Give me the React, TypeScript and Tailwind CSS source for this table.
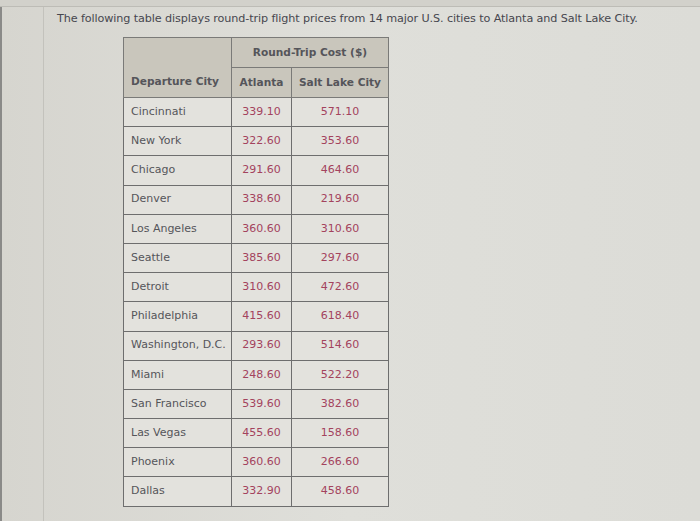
import React from "react";

const rows: [string, string, string][] = [
  ["Cincinnati", "339.10", "571.10"],
  ["New York", "322.60", "353.60"],
  ["Chicago", "291.60", "464.60"],
  ["Denver", "338.60", "219.60"],
  ["Los Angeles", "360.60", "310.60"],
  ["Seattle", "385.60", "297.60"],
  ["Detroit", "310.60", "472.60"],
  ["Philadelphia", "415.60", "618.40"],
  ["Washington, D.C.", "293.60", "514.60"],
  ["Miami", "248.60", "522.20"],
  ["San Francisco", "539.60", "382.60"],
  ["Las Vegas", "455.60", "158.60"],
  ["Phoenix", "360.60", "266.60"],
  ["Dallas", "332.90", "458.60"],
];

export default function App() {
  return (
    <div
      className="w-[700px] h-[521px] overflow-hidden flex flex-col bg-gradient-to-r from-[#d6d5cf] via-[#dfdfda] to-[#dcdcd7] text-[#4a4a50]"
      style={{ fontFamily: '"DejaVu Sans", Verdana, sans-serif' }}
    >
      <div className="h-[7px] shrink-0 bg-[#d2d1cb] border-b border-[#bdbcb6]" />
      <div className="flex flex-1">
        <div className="w-[44px] shrink-0 border-r border-[#c3c2bc] border-l-[2px] border-l-[#8a8a88]" />
        <div className="flex-1 pl-[13px] pt-[5px]">
          <p className="text-[11.2px] leading-[14px] text-[#47474f] tracking-[-0.1px]">
            The following table displays round-trip flight prices from 14 major U.S. cities to Atlanta and Salt Lake City.
          </p>
          <table className="mt-[11px] ml-[66px] border-collapse border border-[#6e6e6e] text-[11px]">
            <thead>
              <tr className="h-[30px] bg-[#c9c6bc] text-[#55555a] font-bold text-[10.6px]">
                <td
                  rowSpan={2}
                  className="w-[108px] border border-[#7a7a78] align-bottom pl-[7px] pb-[7px]"
                >
                  Departure City
                </td>
                <td colSpan={2} className="border border-[#7a7a78] text-center">
                  Round-Trip Cost ($)
                </td>
              </tr>
              <tr className="h-[30px] bg-[#c9c6bc] text-[#55555a] font-bold text-[10.6px]">
                <td className="w-[60px] border border-[#7a7a78] text-center">Atlanta</td>
                <td className="w-[97px] border border-[#7a7a78] text-center">Salt Lake City</td>
              </tr>
            </thead>
            <tbody>
              {rows.map(([c, a, s]) => (
                <tr key={c} className="h-[29.2px] bg-[#e3e2dd]">
                  <td className="border border-[#6e6e6e] pl-[7px] text-[#55555a]">{c}</td>
                  <td className="border border-[#6e6e6e] text-center text-[#a3435d]">{a}</td>
                  <td className="border border-[#6e6e6e] text-center text-[#a3435d]">{s}</td>
                </tr>
              ))}
            </tbody>
          </table>
        </div>
      </div>
    </div>
  );
}
